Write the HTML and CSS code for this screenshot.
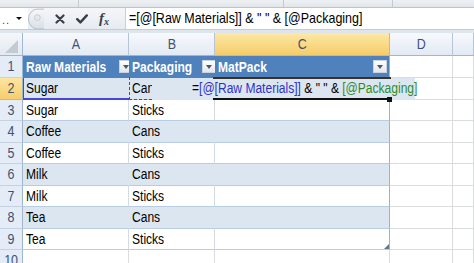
FILE: index.html
```html
<!DOCTYPE html>
<html>
<head>
<meta charset="utf-8">
<link rel="stylesheet" href="styles.css">
</head>
<body>
<div class="ribbon"><span class="rb1"></span><span class="rb2"></span><span class="rb3"></span><span class="rb4"></span></div>
<div class="fbar">
  <div class="namebox"><span class="nb-dots">..</span><span class="nb-arrow"></span></div>
  <div class="grip">
    <svg width="17" height="22" viewBox="0 0 17 22">
      <defs><linearGradient id="gg" x1="0" y1="0" x2="0" y2="1"><stop offset="0" stop-color="#f6f8fa"/><stop offset="1" stop-color="#d9dfe6"/></linearGradient></defs>
      <path d="M17 0.5 H10 A9.5 10.5 0 0 0 0.5 11 A9.5 10.5 0 0 0 10 21.5 H17" fill="url(#gg)" stroke="#b3bdc9"/>
      <circle cx="10" cy="9.5" r="3" fill="#e6e9ed" stroke="#c3cad3"/>
    </svg>
  </div>
  <div class="tools">
    <svg class="ico-x" width="10" height="10" viewBox="0 0 10 10"><path d="M1.5 1.5 L8.5 8.5 M8.5 1.5 L1.5 8.5" stroke="#3a3f47" stroke-width="2.2" stroke-linecap="round"/></svg>
    <svg class="ico-ok" width="12" height="10" viewBox="0 0 12 10"><path d="M1.2 5.2 L4.4 8.4 L10.8 1.4" fill="none" stroke="#3a3f47" stroke-width="2.4" stroke-linecap="round" stroke-linejoin="round"/></svg>
    <span class="fx"><i>f</i><i class="fx-x">x</i></span>
  </div>
  <div class="finput"><span class="tx">=[@[Raw Materials]] &amp; " " &amp; [@Packaging]</span></div>
</div>
<div class="gap"></div>
<div class="sheet">
  <div class="corner"></div>
  <div class="ch"><span class="txc">A</span></div><div class="ch"><span class="txc">B</span></div><div class="ch sel"><span class="txc">C</span></div><div class="ch"><span class="txc">D</span></div><div class="ch"></div>

  <div class="rh"><span class="txc">1</span></div>
  <div class="th"><span class="tx">Raw Materials</span><span class="dd"></span></div>
  <div class="th"><span class="tx">Packaging</span><span class="dd"></span></div>
  <div class="th last"><span class="tx">MatPack</span><span class="dd"></span></div>
  <div class="g"></div><div class="g"></div>

  <div class="rh sel"><span class="txc">2</span></div>
  <div class="c band"><span class="tx">Sugar</span></div><div class="c band"><span class="tx">Cans</span></div><div class="c band last"></div><div class="g"></div><div class="g"></div>

  <div class="rh"><span class="txc">3</span></div>
  <div class="c"><span class="tx">Sugar</span></div><div class="c"><span class="tx">Sticks</span></div><div class="c last"></div><div class="g"></div><div class="g"></div>

  <div class="rh"><span class="txc">4</span></div>
  <div class="c band"><span class="tx">Coffee</span></div><div class="c band"><span class="tx">Cans</span></div><div class="c band last"></div><div class="g"></div><div class="g"></div>

  <div class="rh"><span class="txc">5</span></div>
  <div class="c"><span class="tx">Coffee</span></div><div class="c"><span class="tx">Sticks</span></div><div class="c last"></div><div class="g"></div><div class="g"></div>

  <div class="rh"><span class="txc">6</span></div>
  <div class="c band"><span class="tx">Milk</span></div><div class="c band"><span class="tx">Cans</span></div><div class="c band last"></div><div class="g"></div><div class="g"></div>

  <div class="rh"><span class="txc">7</span></div>
  <div class="c"><span class="tx">Milk</span></div><div class="c"><span class="tx">Sticks</span></div><div class="c last"></div><div class="g"></div><div class="g"></div>

  <div class="rh"><span class="txc">8</span></div>
  <div class="c band"><span class="tx">Tea</span></div><div class="c band"><span class="tx">Cans</span></div><div class="c band last"></div><div class="g"></div><div class="g"></div>

  <div class="rh"><span class="txc">9</span></div>
  <div class="c"><span class="tx">Tea</span></div><div class="c"><span class="tx">Sticks</span></div><div class="c last"></div><div class="g"></div><div class="g"></div>

  <div class="rh"><span class="txc">10</span></div>
  <div class="g"></div><div class="g"></div><div class="g"></div><div class="g"></div><div class="g"></div>

  <div class="ref-a"></div>
  <div class="ref-b"></div>
  <div class="editor"><span class="tx"><span class="t-op">=</span><span class="t-blue">[@[Raw Materials]]</span><span class="t-op"> &amp; " " &amp; </span><span class="t-green">[@Packaging]</span></span></div>
  <div class="active"></div>
  <div class="handle"></div>
  <div class="resize"></div>
</div>
</body>
</html>
```
FILE: styles.css
```css
* { box-sizing: border-box; }
html, body { margin: 0; padding: 0; }
body {
  width: 474px;
  height: 263px;
  overflow: hidden;
  background: #fff;
  font-family: "Liberation Sans", Arial, sans-serif;
  color: #000;
}

/* the source screenshot's text is horizontally condensed */
.tx {
  display: inline-block;
  transform: scaleX(0.86);
  transform-origin: 0 50%;
  white-space: nowrap;
}
.txc {
  display: inline-block;
  transform: scaleX(0.86);
  transform-origin: 50% 50%;
  white-space: nowrap;
}

/* top ribbon strip */
.ribbon {
  height: 8px;
  display: grid;
  grid-template-columns: 79px 205px 109px 1fr;
  background: linear-gradient(#eef1f4, #e2e6eb);
  border-bottom: 1px solid #bcc5cf;
}
.ribbon span { border-right: 1px solid #c4cbd4; }
.ribbon .rb4 { border-right: none; }

/* formula bar */
.fbar {
  height: 22px;
  display: flex;
  background: linear-gradient(#f4f6f9, #e7ebf0);
  border-bottom: 1px solid #c3cbd5;
}
.namebox {
  width: 28px;
  background: #fff;
  display: flex;
  align-items: center;
  padding-left: 2px;
  gap: 6px;
}
.nb-dots { font-size: 11px; color: #444; line-height: 1; margin-top: 3px; letter-spacing: 1px; white-space: nowrap; }
.nb-arrow {
  width: 0; height: 0;
  border-left: 3px solid transparent;
  border-right: 3px solid transparent;
  border-top: 3px solid #111;
}
.grip { width: 16px; display: flex; align-items: stretch; }
.grip svg { display: block; }
.tools {
  width: 81px;
  display: flex;
  align-items: center;
  padding-left: 11px;
  gap: 11px;
}
.ico-x, .ico-ok { display: block; }
.fx {
  font-family: "Liberation Serif", "DejaVu Serif", serif;
  font-weight: bold;
  font-size: 15px;
  color: #3a3f47;
  line-height: 1;
  display: flex;
  align-items: baseline;
}
.fx .fx-x { font-size: 10px; position: relative; top: 2px; }
.finput {
  flex: 1;
  background: #fff;
  border-left: 1px solid #c7ced8;
  padding-left: 3px;
  font-size: 14.5px;
  line-height: 21px;
  white-space: nowrap;
  overflow: hidden;
}

.gap { height: 3px; background: #dfe5ed; }

/* sheet grid */
.sheet {
  position: relative;
  display: grid;
  grid-template-columns: 23px 106px 86px 175px 63px 1fr;
  grid-template-rows: 23px 22px repeat(9, 21.5px);
  font-size: 14px;
}
.corner {
  background: linear-gradient(#f5f7fa, #e3e9f1);
  border-right: 1px solid #9eb6ce;
  border-bottom: 1px solid #9eb6ce;
  display: flex;
  justify-content: flex-end;
  align-items: flex-end;
  padding: 0 4px 2px 0;
}
.corner::after {
  content: "";
  width: 0; height: 0;
  border-style: solid;
  border-width: 0 0 13px 13px;
  border-color: transparent transparent #c2cad4 transparent;
}
.ch {
  background: linear-gradient(#f7f9fc, #e3eaf3);
  border-right: 1px solid #b4c5d8;
  border-bottom: 1px solid #9eb6ce;
  color: #3e5371;
  text-align: center;
  line-height: 22px;
  font-size: 14.5px;
}
.ch.sel {
  background: linear-gradient(#fde8a5, #f6cc6a);
  border-bottom: 1px solid #e8b45a;
  border-right-color: #e2b66a;
}
.rh {
  background: #e4ecf7;
  border-right: 1px solid #9eb6ce;
  border-bottom: 1px solid #c4d2e2;
  color: #3e5371;
  text-align: center;
  line-height: 21px;
  font-size: 14.5px;
  white-space: nowrap;
}
.rh.sel {
  background: linear-gradient(#fde6a0, #f7cd6c);
  border-bottom-color: #e8b45a;
}
.th {
  background: #4f81bd;
  color: #fff;
  font-weight: bold;
  font-size: 14px;
  display: flex;
  align-items: center;
  justify-content: space-between;
  padding-left: 3px;
  padding-right: 2px;
  white-space: nowrap;
  border-bottom: 1px solid #4f81bd;
}
.dd {
  width: 14px;
  height: 13px;
  flex: none;
  background: linear-gradient(#ffffff, #e3e6eb);
  border: 1px solid #c9d2de;
  display: flex;
  align-items: center;
  justify-content: center;
}
.dd::after {
  content: "";
  width: 0; height: 0;
  border-left: 3.5px solid transparent;
  border-right: 3.5px solid transparent;
  border-top: 4px solid #505860;
}
.c {
  background: #fff;
  border-right: 1px solid #d5dbe3;
  border-bottom: 1px solid #b8cce4;
  padding-left: 3px;
  line-height: 21px;
  white-space: nowrap;
  overflow: hidden;
}
.c.band {
  background: #dce6f1;
  border-right-color: #dce6f1;
}
.c.last, .th.last { border-right: 1px solid #95b3d7; }
.g {
  background: #fff;
  border-right: 1px solid #dadcdd;
  border-bottom: 1px solid #dadcdd;
}

/* overlays for in-cell editing */
.ref-a {
  position: absolute;
  left: 23px;
  top: 45px;
  width: 106px;
  height: 21.5px;
  border-bottom: 2px solid #4646d8;
  border-left: 1px solid #4646d8;
}
.ref-b {
  position: absolute;
  left: 129px;
  top: 44px;
  width: 88px;
  height: 22.5px;
  border: 1.5px dashed #2f6a2f;
  border-top-color: #4c9a4c;
}
.editor {
  position: absolute;
  left: 152px;
  top: 45px;
  width: 263px;
  height: 21.5px;
  background: #dce6f1;
  padding-left: 40px;
  line-height: 21.5px;
  white-space: nowrap;
  font-size: 14px;
}
.t-blue { color: #3131c8; }
.t-green { color: #2e8a2e; }
.active {
  position: absolute;
  left: 213px;
  top: 43.5px;
  width: 178px;
  height: 23.5px;
  border-top: 2px solid #3a3226;
  border-bottom: 2px solid #111;
}
.handle {
  position: absolute;
  left: 387px;
  top: 64px;
  width: 5px;
  height: 5px;
  background: #111;
}
.resize {
  position: absolute;
  left: 384px;
  top: 211px;
  width: 0; height: 0;
  border-style: solid;
  border-width: 0 0 5px 5px;
  border-color: transparent transparent #6b7685 transparent;
}
```
